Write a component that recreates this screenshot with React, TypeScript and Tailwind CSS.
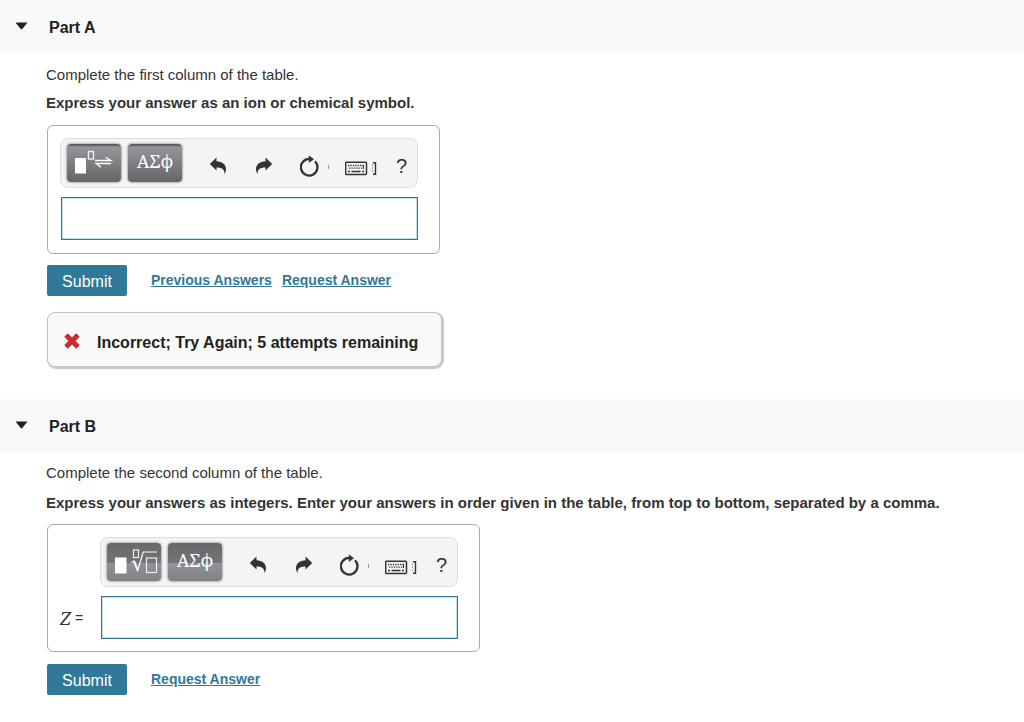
import { useState, type ReactNode } from "react";

function UndoIcon() {
  return (
    <svg viewBox="0 0 18 18" className="h-[18px] w-[18px]" fill="#333" aria-hidden="true">
      <path d="M0.800 7 7.500 0.600v3.600C13 4.400 17 7.200 17 12.100c0 2-.7 3.700-1.600 5 .3-4.500-2.400-6.500-7.900-6.500V13.500Z" />
    </svg>
  );
}

function RedoIcon() {
  return (
    <svg viewBox="0 0 18 18" className="h-[18px] w-[18px]" fill="#333" aria-hidden="true">
      <path d="M17.200 7 10.500 0.600v3.600C5 4.400 1 7.200 1 12.100c0 2 .7 3.700 1.600 5-.3-4.500 2.400-6.500 7.900-6.500V13.500Z" />
    </svg>
  );
}

function ResetIcon() {
  return (
    <svg viewBox="0 0 30 22" className="h-[22px] w-[30px]" fill="none" aria-hidden="true">
      <path d="M15 6.300A8.300 8.300 0 1 1 9.500 3.900" stroke="#333" strokeWidth="2.300" />
      <path d="M8.800 0.300 14 4.200 8.800 8Z" fill="#333" />
      <path d="M28.500 10v4" stroke="#999" strokeWidth="1" />
    </svg>
  );
}

function KeyboardIcon() {
  return (
    <svg viewBox="0 0 32 15" className="h-[15px] w-8" fill="none" stroke="#333" aria-hidden="true">
      <rect x="0.700" y="1.200" width="20.800" height="12.300" rx="1" strokeWidth="1.500" />
      <path d="M3 4.500h16" strokeWidth="1.300" strokeDasharray="1.300 1.100" />
      <path d="M4 7.200h15" strokeWidth="1.300" strokeDasharray="1.300 1.100" />
      <path d="M18.500 4v4" strokeWidth="1" />
      <path d="M3 10.500h2M6.500 10.500h9M17 10.500h2" strokeWidth="1.300" />
      <path d="M28 1.800h2.500v11.500H28" strokeWidth="1.400" />
      <path d="M27.500 3v9" stroke="#aaa" strokeWidth="1" strokeDasharray="2 1" />
    </svg>
  );
}

function ReactionTemplateIcon() {
  return (
    <svg viewBox="0 0 54 38" className="h-[38px] w-[54px]" fill="none" stroke="#fff" aria-hidden="true">
      <rect x="8" y="14" width="11" height="15.500" fill="#fff" stroke="none" />
      <rect x="21.500" y="7.500" width="5" height="7.500" stroke="#eee" strokeWidth="1.400" />
      <path d="M28 16.500h16l-5.500-3.200M44 19.500H29l5 3.800" strokeWidth="1.300" />
    </svg>
  );
}

function RootTemplateIcon() {
  return (
    <svg viewBox="0 0 54 38" className="h-[38px] w-[54px]" fill="none" stroke="#fff" aria-hidden="true">
      <rect x="8" y="14.500" width="11.500" height="16" fill="#fff" stroke="none" />
      <rect x="26.500" y="7" width="5" height="7.500" stroke="#eee" strokeWidth="1.200" />
      <path d="M24.500 19.500 27 18l3.700 9.500 5.500-18.500H50" strokeWidth="1.200" />
      <path d="m27 18 3.500 9" strokeWidth="2" />
      <rect x="39.500" y="15" width="10" height="14.500" stroke="#eee" strokeWidth="1.200" />
    </svg>
  );
}

const paletteButton =
  "flex h-[38px] w-[54px] items-center justify-center rounded-[4px] text-white shadow-[0_0_2px_1px_#b3b3b3]";
const smooth = "bg-[linear-gradient(to_bottom,#58585a_2%,#94949b_8%,#656567_100%)]";
const split = "bg-[linear-gradient(to_bottom,#68686a_0%,#747476_52%,#92929b_53%,#808086_100%)]";

function Toolbar({ template, glossy }: { template: ReactNode; glossy?: boolean }) {
  const fill = glossy ? split : smooth;
  return (
    <div
      role="toolbar"
      aria-label="Equation tools"
      className="flex h-[50px] w-[358px] items-start rounded-lg border border-[#dedede] bg-[#f4f4f4] pt-[5px] pl-[6px]"
    >
      <button type="button" aria-label="Templates" className={`${paletteButton} ${fill}`}>
        {template}
      </button>
      <button
        type="button"
        aria-label="Symbols"
        className={`${paletteButton} ml-[7px] pb-1 font-['Noto_Serif','Liberation_Serif',serif] text-lg ${fill}`}
      >
        ΑΣϕ
      </button>
      <div className="ml-[27px] flex h-11 items-center text-[#333]">
        <button type="button" aria-label="Undo">
          <UndoIcon />
        </button>
        <button type="button" aria-label="Redo" className="ml-7">
          <RedoIcon />
        </button>
        <button type="button" aria-label="Reset" className="ml-[27px]">
          <ResetIcon />
        </button>
        <button type="button" aria-label="Keyboard shortcuts" className="ml-[15px] pt-1">
          <KeyboardIcon />
        </button>
        <button type="button" aria-label="Help" className="ml-[19px] text-xl leading-5">
          ?
        </button>
      </div>
    </div>
  );
}

function PartHeader({ title, open, onToggle }: { title: string; open: boolean; onToggle: () => void }) {
  return (
    <h2 className="bg-[#f9f9f9]">
      <button
        type="button"
        aria-expanded={open}
        onClick={onToggle}
        className="flex h-[53px] w-full items-center gap-[21px] pt-[3px] pl-[15px] text-left text-base font-bold text-[#222]"
      >
        <svg viewBox="0 0 13 8" className={open ? "mb-1 h-2 w-[13px]" : "mb-1 h-2 w-[13px] -rotate-90"} aria-hidden="true">
          <path d="M0.500 0.500h12l-5 6.200q-1 1-2 0Z" fill="#222" />
        </svg>
        {title}
      </button>
    </h2>
  );
}

const answerInput =
  "block h-[43px] w-[357px] border border-[#317999] bg-white px-2 text-base shadow-[inset_0_0_0_1px_#c3dde8] outline-none";
const link = "text-sm leading-[17px] font-bold text-[#317999] underline";

function Submit() {
  return (
    <button type="submit" className="h-[31px] w-20 rounded-[2px] bg-[#317999] pt-[2px] text-base text-white">
      Submit
    </button>
  );
}

export default function App() {
  const [openA, setOpenA] = useState(true);
  const [openB, setOpenB] = useState(true);
  return (
    <main className="min-h-screen bg-white font-['Liberation_Sans',Arial,sans-serif] text-[#333]">
      <section>
        <PartHeader title="Part A" open={openA} onToggle={() => setOpenA(!openA)} />
        {openA && (
          <form onSubmit={(e) => e.preventDefault()} className="px-[46px] pt-3 pb-8">
            <p className="text-[15px] leading-5">Complete the first column of the table.</p>
            <p className="mt-2 text-[15px] leading-5 font-bold">Express your answer as an ion or chemical symbol.</p>
            <div className="mt-3 ml-px w-[393px] rounded-md border border-[#a9a9a9] pt-3 pb-[13px] pl-3">
              <Toolbar template={<ReactionTemplateIcon />} />
              <input aria-label="Answer for Part A" className={`mt-[9px] ml-px ${answerInput}`} />
            </div>
            <div className="mt-[11px] ml-px flex items-center">
              <Submit />
              <a href="#previous" className={`ml-6 ${link}`}>
                Previous Answers
              </a>
              <a href="#request-a" className={`ml-[10px] ${link}`}>
                Request Answer
              </a>
            </div>
            <div
              role="status"
              className="mt-4 ml-px flex h-[55px] w-[395px] items-center rounded-lg border border-[#c4c4c4] bg-[#f9f9f9] pt-[6px] pl-4 text-base font-bold text-[#222] shadow-[1px_1px_1px_1px_#c8c8c8]"
            >
              <svg viewBox="0 0 16 16" className="mr-[17px] mb-1 h-4 w-4 shrink-0" aria-hidden="true">
                <path
                  d="M3.800 1.200 8 5.400l4.200-4.200 2.600 2.600L10.600 8l4.200 4.200-2.600 2.600L8 10.600l-4.200 4.200-2.600-2.600L5.400 8 1.200 3.800Z"
                  fill="#cd2a2f"
                  stroke="#cd2a2f"
                  strokeWidth="1.400"
                  strokeLinejoin="round"
                />
              </svg>
              Incorrect; Try Again; 5 attempts remaining
            </div>
          </form>
        )}
      </section>
      <section>
        <PartHeader title="Part B" open={openB} onToggle={() => setOpenB(!openB)} />
        {openB && (
          <form onSubmit={(e) => e.preventDefault()} className="px-[46px] pt-[11px]">
            <p className="text-[15px] leading-5">Complete the second column of the table.</p>
            <p className="mt-[10px] text-[15px] leading-5 font-bold">
              Express your answers as integers. Enter your answers in order given in the table, from top to bottom,
              separated by a comma.
            </p>
            <div className="mt-[11px] ml-px grid w-[433px] grid-cols-[40px_1fr] rounded-md border border-[#a9a9a9] pt-3 pb-3 pl-3">
              <div className="col-start-2">
                <Toolbar template={<RootTemplateIcon />} glossy />
              </div>
              <label htmlFor="answer-b" className="mt-[9px] flex items-center text-sm whitespace-nowrap">
                <i className="mr-1 font-['Noto_Serif','Liberation_Serif',serif] text-lg">Z</i> =
              </label>
              <input id="answer-b" className={`mt-[9px] ml-px ${answerInput}`} />
            </div>
            <div className="mt-3 ml-px flex items-center">
              <Submit />
              <a href="#request-b" className={`ml-6 ${link}`}>
                Request Answer
              </a>
            </div>
          </form>
        )}
      </section>
    </main>
  );
}
